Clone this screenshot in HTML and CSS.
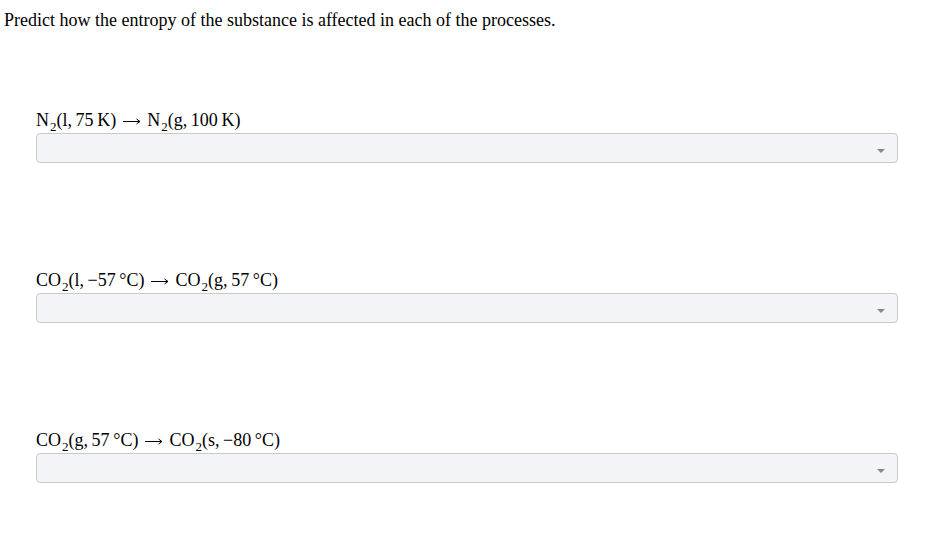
FILE: index.html
```html
<!DOCTYPE html>
<html>
<head>
<meta charset="utf-8">
<link rel="stylesheet" href="styles.css">
</head>
<body>
<p class="prompt">Predict how the entropy of the substance is affected in each of the processes.</p>
<div class="questions">
  <div class="q">
    <div class="eq">N<sub>2</sub>(l,&#8201;75&#8201;K) <svg class="arr" width="18" height="8" viewBox="0 0 18 8"><path d="M0 4.5H16.5M13.5 2L17 4.5L13.5 7" fill="none" stroke="#000" stroke-width="1"/></svg> N<sub>2</sub>(g,&#8201;100&#8201;K)</div>
    <div class="select"><span class="caret"></span></div>
  </div>
  <div class="q">
    <div class="eq">CO<sub>2</sub>(l,&#8201;&minus;57&#8201;°C) <svg class="arr" width="18" height="8" viewBox="0 0 18 8"><path d="M0 4.5H16.5M13.5 2L17 4.5L13.5 7" fill="none" stroke="#000" stroke-width="1"/></svg> CO<sub>2</sub>(g,&#8201;57&#8201;°C)</div>
    <div class="select"><span class="caret"></span></div>
  </div>
  <div class="q">
    <div class="eq">CO<sub>2</sub>(g,&#8201;57&#8201;°C) <svg class="arr" width="18" height="8" viewBox="0 0 18 8"><path d="M0 4.5H16.5M13.5 2L17 4.5L13.5 7" fill="none" stroke="#000" stroke-width="1"/></svg> CO<sub>2</sub>(s,&#8201;&minus;80&#8201;°C)</div>
    <div class="select"><span class="caret"></span></div>
  </div>
</div>
</body>
</html>
```
FILE: styles.css
```css
html, body {
  margin: 0;
  padding: 0;
  background: #fff;
}
body {
  font-family: "Liberation Serif", "Times New Roman", serif;
  color: #000;
  font-size: 18px;
}
.prompt {
  margin: 0;
  padding: 10px 4px 0 4px;
  line-height: 20px;
}
.questions {
  display: flex;
  flex-direction: column;
  gap: 105px;
  padding: 78px 36px 0 36px;
  width: 862px;
}
.q {
  display: flex;
  flex-direction: column;
  gap: 1px;
}
.eq {
  font-size: 18px;
  line-height: 24px;
  height: 24px;
  white-space: nowrap;
}
.eq sub {
  font-size: 13px;
  line-height: 0;
  vertical-align: -5px;
  margin-left: 1px;
}
.arr {
  vertical-align: 1px;
  margin: 0 2px;
}
.select {
  box-sizing: border-box;
  height: 30px;
  border: 1px solid #c9c9cc;
  border-radius: 4px;
  background: #f3f4f8;
  display: flex;
  align-items: center;
  justify-content: flex-end;
  padding-right: 12px;
}
.caret {
  width: 0;
  height: 0;
  border-left: 4px solid transparent;
  border-right: 4px solid transparent;
  border-top: 4px solid #888;
  margin-top: 5px;
}
```
